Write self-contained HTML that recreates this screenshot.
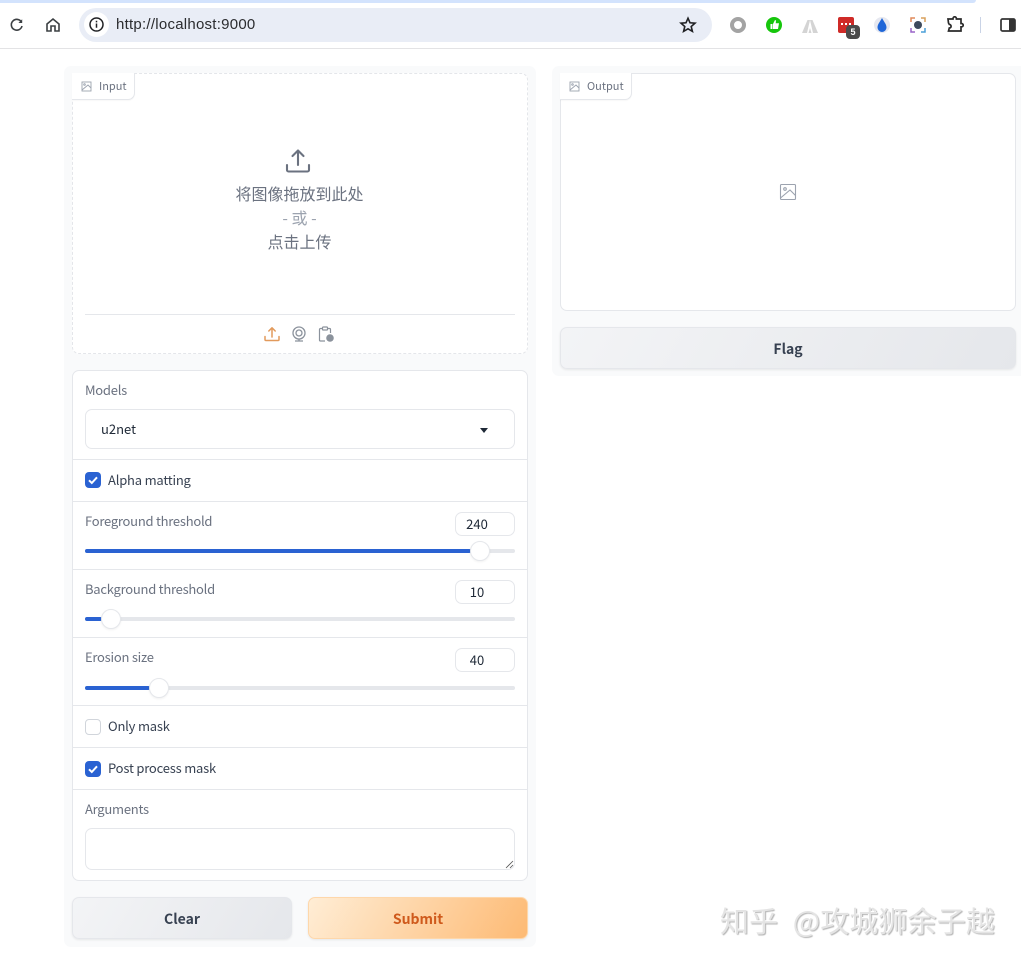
<!DOCTYPE html>
<html><head><meta charset="utf-8">
<style>
*{box-sizing:border-box}
html,body{margin:0;padding:0;background:#fff;width:1021px;height:962px;overflow:hidden}
body{position:relative;font-family:"Noto Sans CJK SC","Liberation Sans",sans-serif;color:#374151}
.a{position:absolute}
.t{position:absolute;white-space:nowrap;line-height:20px}
.lbl{font-size:13px;color:#6b7280;letter-spacing:-.25px}
.v{font-size:13px;letter-spacing:-.2px;color:#374151}
.cb{position:absolute;width:16px;height:16px;border-radius:4px;background:#2a62d2}
.hr{position:absolute;left:73px;width:454px;height:1px;background:#e5e7eb}
.num{position:absolute;left:455px;width:60px;height:24px;border:1px solid #e5e7eb;border-radius:7px;background:#fff;font-size:13px;line-height:22px;text-align:center;padding-right:16px;color:#1f2937}
.tr{position:absolute;left:85px;width:430px;height:4px;border-radius:2px;background:#e5e7eb}
.fill{position:absolute;left:85px;height:4px;border-radius:2px;background:#2a62d2}
.th{position:absolute;width:20px;height:20px;border-radius:50%;background:#fff;border:1px solid #e5e7eb;box-shadow:0 1px 2px rgba(0,0,0,.06)}
.btn{position:absolute;height:42px;border-radius:7px;text-align:center;font-weight:700;font-size:14px;line-height:43px;box-shadow:0 1px 2px rgba(0,0,0,.08)}
.gray{background:linear-gradient(120deg,#f3f4f6,#e5e7eb);border:1px solid #e5e7eb;color:#374151}
.or{background:linear-gradient(120deg,#ffedd5,#fdba74);color:#cf5a1c;border:1px solid #fed7aa}
.tab{position:absolute;top:73px;height:27px;background:#fff;border:1px solid #e5e7eb;border-top:0;border-left:0;border-radius:0 0 7px 0;font-size:11px;color:#6b7280;line-height:26px}
</style></head><body>
<!-- browser chrome -->
<div class="a" style="left:0;top:0;width:976px;height:3px;background:#d3e3fd;border-radius:0 0 3px 0"></div>
<div class="a" style="left:0;top:48px;width:1021px;height:1px;background:#e3e3e5"></div>
<svg class="a" style="left:8px;top:16px" width="18" height="18" viewBox="0 0 18 18" fill="none" stroke="#3c4043" stroke-width="1.6"><path d="M13.5 6.2A5.4 5.4 0 1 0 14 10"/><path d="M14.2 3.2v3.8h-3.8z" fill="#3c4043" stroke="none"/></svg>
<svg class="a" style="left:44px;top:16px" width="18" height="18" viewBox="0 0 18 18" fill="none" stroke="#3c4043" stroke-width="1.6"><path d="M3 8l6-5 6 5v7h-4v-5H7v5H3z"/></svg>
<div class="a" style="left:79px;top:8px;width:633px;height:34px;border-radius:17px;background:#e9edf6"></div>
<div class="a" style="left:84px;top:12px;width:25px;height:25px;border-radius:50%;background:#fff"></div>
<svg class="a" style="left:88px;top:16px" width="17" height="17" viewBox="0 0 17 17" fill="none" stroke="#202124" stroke-width="1.5"><circle cx="8.5" cy="8.5" r="6.5"/><path d="M8.5 7.5v4.2M8.5 4.8v1.6"/></svg>
<div class="t" style="left:116px;top:15px;font-family:'Liberation Sans',sans-serif;font-size:15px;letter-spacing:.25px;color:#2b2c2f">http://localhost:9000</div>
<svg class="a" style="left:679px;top:16px" width="18" height="18" viewBox="0 0 18 18" fill="none" stroke="#202124" stroke-width="1.6"><path d="M9 2.2l2 4.6 5 .4-3.8 3.3 1.2 4.9L9 12.8l-4.4 2.6 1.2-4.900L2 7.200l5-.4z"/></svg>
<div class="a" style="left:730px;top:17px;width:16px;height:16px;border-radius:50%;border:4px solid #a3a3a3"></div>
<div class="a" style="left:766px;top:17px;width:16px;height:16px;border-radius:50%;background:#16c60c"></div>
<svg class="a" style="left:769px;top:19px" width="11" height="11" viewBox="0 0 11 11"><path d="M1.500 5h2v5h-2zM4 5l2-4 1 .5-.3 2.700H10l-1 5.800H4z" fill="#fff"/></svg>
<svg class="a" style="left:802px;top:18px" width="16" height="15" viewBox="0 0 16 15"><path d="M0 15L5.500 2h2.500L5 15zM16 15L10.500 2H8l3 13zM6.500 15L8 10l1.500 5z" fill="#d4d4d4"/></svg>
<div class="a" style="left:838px;top:17px;width:16px;height:16px;border-radius:2px;background:#cf2a27"></div>
<div class="a" style="left:841px;top:23px;width:2px;height:2px;background:#fff;box-shadow:4px 0 #fff,8px 0 #fff"></div>
<div class="a" style="left:846px;top:25px;width:14px;height:14px;border-radius:4px;background:#4b4b4b;color:#fff;font:700 9px/14px 'Liberation Sans',sans-serif;text-align:center">5</div>
<div class="a" style="left:874px;top:17px;width:16px;height:16px;border-radius:50%;background:#e6e8f0"></div>
<svg class="a" style="left:876px;top:17px" width="12" height="16" viewBox="0 0 12 16"><path d="M6 1C4 5 1.500 7 1.500 10.500a4.500 4.500 0 0 0 9 0C10.500 7 8 5 6 1z" fill="#1f66d8"/></svg>
<svg class="a" style="left:910px;top:17px" width="16" height="16" viewBox="0 0 16 16" fill="none" stroke-width="1.5"><path d="M1 5V1h4" stroke="#e08a5a"/><path d="M11 1h4v4" stroke="#d9a05b"/><path d="M1 11v4h4" stroke="#9a63c9"/><path d="M11 15h4v-4" stroke="#4a9fd8"/><circle cx="8" cy="8" r="4" fill="#3d4a5c" stroke="none"/></svg>
<svg class="a" style="left:946px;top:16px" width="18" height="18" viewBox="0 0 18 18" fill="none" stroke="#2a2a2a" stroke-width="1.7"><path d="M2 3h5V2.500a1.700 1.700 0 0 1 3.400 0V3H15v4.500h.5a1.700 1.700 0 0 1 0 3.400H15V15H2.500l.8-3a1.800 1.800 0 0 0 0-3.600L2.500 7z"/></svg>
<div class="a" style="left:980px;top:17px;width:1px;height:16px;background:#c9d3e6"></div>
<svg class="a" style="left:1000px;top:17px" width="16" height="16" viewBox="0 0 16 16"><rect x="1" y="2" width="14" height="12" rx="1.500" fill="none" stroke="#333" stroke-width="1.700"/><rect x="9" y="2" width="6" height="12" fill="#333"/></svg>

<!-- panels -->
<div class="a" style="left:64px;top:66px;width:472px;height:881px;background:#f9fafb;border-radius:7px"></div>
<div class="a" style="left:552px;top:66px;width:469px;height:310px;background:#f9fafb;border-radius:7px 0 0 7px"></div>

<!-- Input -->
<div class="a" style="left:72px;top:73px;width:456px;height:281px;background:#fff;border:1px dashed #e4e6ea;border-radius:7px"></div>
<div class="tab" style="left:72px;width:63px;box-shadow:0 1px 1px rgba(0,0,0,.03)"><svg class="a" style="left:9px;top:8px" width="11" height="11" viewBox="0 0 11 11" fill="none" stroke="#9ca3af" stroke-width=".9"><rect x="1" y="1" width="9" height="9"/><path d="M1 9l6-5 3 3"/><circle cx="3.500" cy="3.500" r=".8"/></svg><span class="a" style="left:27px;top:0;white-space:nowrap">Input</span></div>
<svg class="a" style="left:285px;top:148px" width="26" height="26" viewBox="0 0 26 26" fill="none" stroke="#6b7280" stroke-width="2.100" stroke-linecap="round" stroke-linejoin="round"><path d="M2 17v5a1.500 1.500 0 0 0 1.500 1.500h19a1.500 1.500 0 0 0 1.500-1.500v-5"/><path d="M13 17V3M7.500 8L13 2.500 18.500 8"/></svg>
<div class="t" style="left:72px;width:455px;top:181px;height:24px;line-height:24px;text-align:center;font-size:16px;color:#6b7280">将图像拖放到此处</div>
<div class="t" style="left:72px;width:455px;top:205px;height:24px;line-height:24px;text-align:center;font-size:16px;color:#9ca3af">- 或 -</div>
<div class="t" style="left:72px;width:455px;top:229px;height:24px;line-height:24px;text-align:center;font-size:16px;color:#6b7280">点击上传</div>
<div class="a" style="left:85px;top:314px;width:430px;height:1px;background:#e5e7eb"></div>
<svg class="a" style="left:264px;top:326px" width="16" height="16" viewBox="0 0 16 16" fill="none" stroke="#e29a5c" stroke-width="1.500" stroke-linecap="round" stroke-linejoin="round"><path d="M1 10.500v3a1 1 0 0 0 1 1h12a1 1 0 0 0 1-1v-3"/><path d="M8 11V2M4.800 5L8 1.800 11.200 5"/></svg>
<svg class="a" style="left:291px;top:326px" width="16" height="16" viewBox="0 0 16 16" fill="none" stroke="#8b929c" stroke-width="1.300"><circle cx="8" cy="7" r="6"/><circle cx="8" cy="7" r="3"/><path d="M4 15h8M8 13v2"/></svg>
<svg class="a" style="left:318px;top:326px" width="16" height="16" viewBox="0 0 16 16" fill="none" stroke="#8b929c" stroke-width="1.200"><path d="M4 2.500H2.500a1 1 0 0 0-1 1V14a1 1 0 0 0 1 1H7M10 2.500h1.500a1 1 0 0 1 1 1V7"/><rect x="4.500" y="1" width="5" height="3" rx=".8"/><circle cx="12" cy="12" r="3.800" fill="#8b929c" stroke="none"/></svg>

<!-- Output -->
<div class="a" style="left:560px;top:73px;width:456px;height:238px;background:#fff;border:1px solid #e5e7eb;border-radius:7px"></div>
<div class="tab" style="left:560px;width:72px;box-shadow:0 1px 1px rgba(0,0,0,.03)"><svg class="a" style="left:9px;top:8px" width="11" height="11" viewBox="0 0 11 11" fill="none" stroke="#9ca3af" stroke-width=".9"><rect x="1" y="1" width="9" height="9"/><path d="M1 9l6-5 3 3"/><circle cx="3.500" cy="3.500" r=".8"/></svg><span class="a" style="left:27px;top:0;white-space:nowrap">Output</span></div>
<svg class="a" style="left:779px;top:183px" width="18" height="18" viewBox="0 0 18 18" fill="none" stroke="#9ca3af" stroke-width="1.100"><rect x="1.500" y="1.500" width="15" height="15" rx="1"/><circle cx="6" cy="6" r="1.300"/><path d="M1.500 15L11 7l5.500 5.500"/></svg>
<div class="btn gray" style="left:560px;top:327px;width:456px">Flag</div>

<!-- Form -->
<div class="a" style="left:72px;top:370px;width:456px;height:511px;background:#fff;border:1px solid #e5e7eb;border-radius:7px"></div>
<div class="t lbl" style="left:85px;top:380px">Models</div>
<div class="a" style="left:85px;top:409px;width:430px;height:40px;border:1px solid #e5e7eb;border-radius:7px"></div>
<div class="t" style="left:101px;top:419px;font-size:13px;color:#1f2937">u2net</div>
<div class="a" style="left:480px;top:428px;width:0;height:0;border-left:4.500px solid transparent;border-right:4.500px solid transparent;border-top:5px solid #1f2937"></div>
<div class="hr" style="top:459px"></div>
<div class="cb" style="left:85px;top:472px"></div>
<svg class="a" style="left:85px;top:472px" width="16" height="16" viewBox="0 0 16 16" fill="none" stroke="#fff" stroke-width="2"><path d="M4 8.300l2.800 2.700L12 5.300"/></svg>
<div class="t v" style="left:108px;top:470px">Alpha matting</div>
<div class="hr" style="top:501px"></div>
<div class="t lbl" style="left:85px;top:511px">Foreground threshold</div>
<div class="num" style="top:512px">240</div>
<div class="tr" style="top:549px"></div><div class="fill" style="top:549px;width:386px"></div><div class="th" style="left:470px;top:541px"></div>
<div class="hr" style="top:569px"></div>
<div class="t lbl" style="left:85px;top:579px">Background threshold</div>
<div class="num" style="top:580px">10</div>
<div class="tr" style="top:617px"></div><div class="fill" style="top:617px;width:17px"></div><div class="th" style="left:101px;top:609px"></div>
<div class="hr" style="top:637px"></div>
<div class="t lbl" style="left:85px;top:647px">Erosion size</div>
<div class="num" style="top:648px">40</div>
<div class="tr" style="top:686px"></div><div class="fill" style="top:686px;width:65px"></div><div class="th" style="left:149px;top:678px"></div>
<div class="hr" style="top:705px"></div>
<div class="a" style="left:85px;top:719px;width:16px;height:16px;border:1px solid #d1d5db;border-radius:4px;background:#fff"></div>
<div class="t v" style="left:108px;top:716px">Only mask</div>
<div class="hr" style="top:747px"></div>
<div class="cb" style="left:85px;top:761px"></div>
<svg class="a" style="left:85px;top:761px" width="16" height="16" viewBox="0 0 16 16" fill="none" stroke="#fff" stroke-width="2"><path d="M4 8.300l2.800 2.700L12 5.300"/></svg>
<div class="t v" style="left:108px;top:758px">Post process mask</div>
<div class="hr" style="top:789px"></div>
<div class="t lbl" style="left:85px;top:799px">Arguments</div>
<div class="a" style="left:85px;top:828px;width:430px;height:42px;border:1px solid #e5e7eb;border-radius:7px"></div>
<svg class="a" style="left:505px;top:860px" width="9" height="9" viewBox="0 0 9 9" stroke="#555" stroke-width=".8"><path d="M1 8L8 1M5 8l3-3"/></svg>

<div class="btn gray" style="left:72px;top:897px;width:220px">Clear</div>
<div class="btn or" style="left:308px;top:897px;width:220px">Submit</div>

<!-- watermark -->
<div class="t" style="left:720px;top:900px;height:40px;line-height:40px;font-size:29px;color:#e4e4e4;text-shadow:-1px -1px 0 #fff,1px 1px 1px #b5b5b5;word-spacing:8px;letter-spacing:.1px">知乎 @攻城狮余子越</div>
</body></html>
